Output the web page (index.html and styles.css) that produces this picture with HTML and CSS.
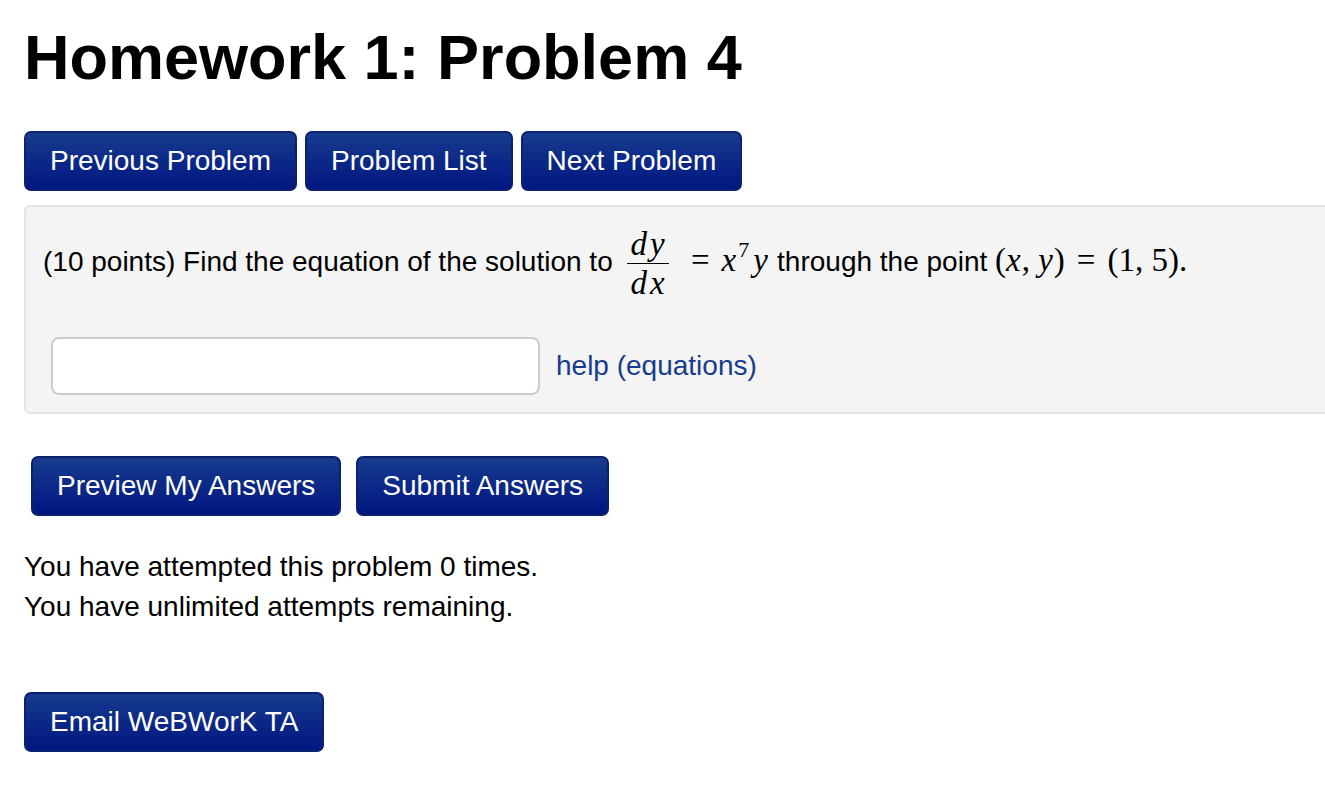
FILE: index.html
```html
<!DOCTYPE html>
<html lang="en">
  <head>
    <meta charset="UTF-8" />
    <meta name="viewport" content="width=device-width, initial-scale=1.0" />
    <title>Homework 1: Problem 4</title>
    <link rel="stylesheet" href="styles.css">
  </head>
  <body>
    <div id="page">
      <h1 id="title">Homework 1: Problem 4</h1>

      <div id="nav">
        <a class="btn" href="#">Previous Problem</a>
        <a class="btn" href="#">Problem List</a>
        <a class="btn" href="#">Next Problem</a>
      </div>

      <div id="problem">
        <p class="statement">
          (10 points) Find the equation of the solution to
          <span class="math">
            <span class="frac">
              <span class="num"><i>dy</i></span>
              <span class="den"><i>dx</i></span>
            </span>
            <span class="op">=</span><i>x</i><sup>7</sup><i class="after-sup">y</i>
          </span>
          through the point
          <span class="math">(<i>x</i>,&nbsp;<i>y</i>)<span class="op">=</span>(1, 5).</span>
        </p>
        <div class="answer-row">
          <input type="text" class="answer" />
          <a class="help" href="#">help (equations)</a>
        </div>
      </div>

      <div id="submit">
        <button class="btn">Preview My Answers</button>
        <button class="btn">Submit Answers</button>
      </div>

      <div id="attempts">
        You have attempted this problem 0 times.<br>
        You have unlimited attempts remaining.
      </div>

      <div id="email">
        <button class="btn">Email WeBWorK TA</button>
      </div>
    </div>
  </body>
</html>
```

FILE: styles.css
```css
html,
body {
  overflow-x: hidden;
}
body {
  margin: 0;
  padding: 0;
  font-family: "Liberation Sans", Arial, sans-serif;
  font-size: 28px;
  line-height: 40px;
  color: #000;
  background-color: #fff;
}
#page {
  padding: 22px 0 0 24px;
}
#title {
  margin: 0 0 39px 0;
  font-size: 63px;
  line-height: 70px;
  font-weight: bold;
}
.btn {
  display: inline-block;
  box-sizing: border-box;
  padding: 8px 24px;
  font-family: "Liberation Sans", Arial, sans-serif;
  font-size: 28px;
  line-height: 40px;
  color: #fff;
  text-decoration: none;
  background: linear-gradient(#173b8d, #001681);
  border: 2px solid #0b2270;
  border-radius: 7px;
  cursor: pointer;
}
#nav {
  display: flex;
  gap: 8px;
}
#problem {
  box-sizing: border-box;
  width: calc(100% + 60px);
  margin-top: 14px;
  padding: 21px 17px 17px 17px;
  background-color: #f4f4f4;
  border: 2px solid #e3e3e3;
  border-radius: 6px;
}
.statement {
  margin: 0;
  white-space: nowrap;
}
.math {
  font-family: "Liberation Serif", "Times New Roman", serif;
  font-size: 33px;
}
.math i {
  font-style: italic;
  letter-spacing: 1px;
}
.frac {
  display: inline-flex;
  flex-direction: column;
  align-items: center;
  vertical-align: middle;
  margin: 0 2px 0 6px;
}
.frac i {
  letter-spacing: 3px;
}
.num,
.den {
  line-height: 32px;
  padding: 0 1px 0 4px;
}
.num {
  padding-bottom: 3px;
  border-bottom: 1.5px solid #000;
}
.den {
  padding-top: 3px;
}
.op {
  margin: 0 12px;
}
sup {
  font-size: 22px;
  line-height: 0;
  vertical-align: 14px;
  margin-left: 1px;
}
.after-sup {
  margin-left: 4px;
}
.answer-row {
  display: flex;
  align-items: center;
  gap: 16px;
  margin: 38px 0 0 8px;
}
.answer {
  box-sizing: border-box;
  width: 489px;
  height: 58px;
  padding: 8px 12px;
  font-size: 28px;
  background-color: #fff;
  border: 2px solid #ccc;
  border-radius: 8px;
}
.help {
  color: #173c8c;
  text-decoration: none;
}
#submit {
  display: flex;
  gap: 15px;
  margin: 42px 0 0 7px;
}
#attempts {
  margin-top: 31px;
}
#email {
  margin-top: 65px;
}
```
